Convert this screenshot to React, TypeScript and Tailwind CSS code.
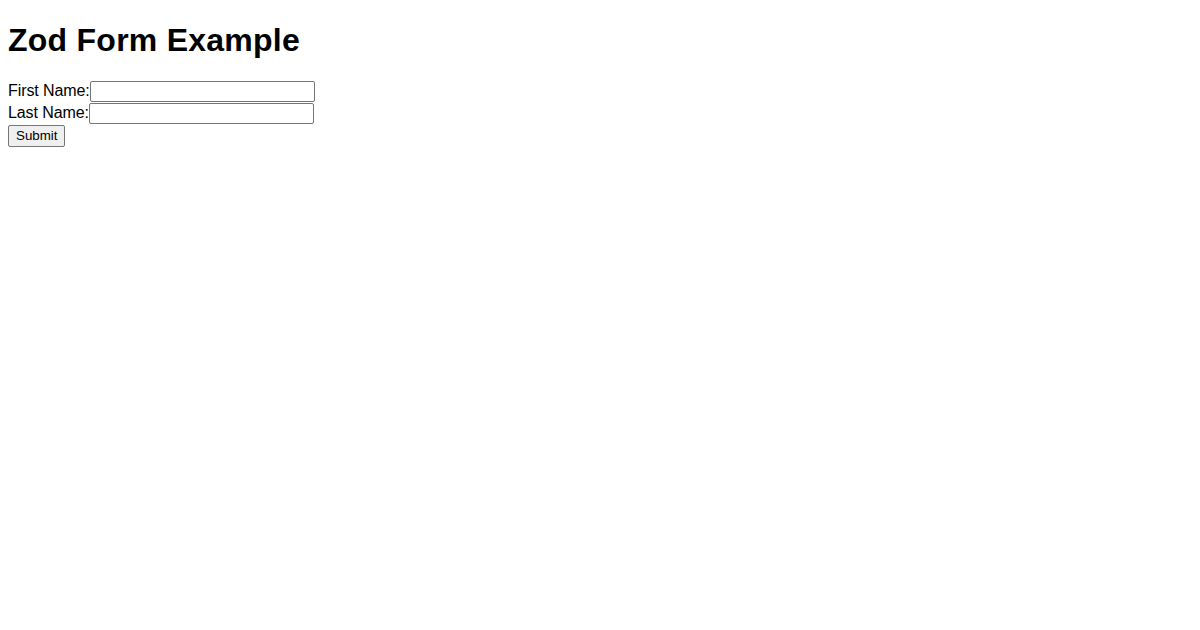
export default function App() {
  return (
    <div className="px-2 pt-[22.44px] font-['Liberation_Sans',Arial,sans-serif] text-base text-black bg-white min-h-[630px] leading-[normal]">
      <h1 className="text-[32px] font-bold mb-[20.44px] leading-[normal] tracking-[0.25px]">Zod Form Example</h1>
      <form onSubmit={(e) => e.preventDefault()}>
        <div>
          <label htmlFor="firstName" className="tracking-[-0.09px]">First Name:</label>
          <input
            id="firstName"
            type="text"
            className="w-[225px] h-[21px] mt-[1px] border border-[#767676] rounded-[2px] px-[2px] py-[1px] text-[13.33px] align-baseline bg-white"
          />
        </div>
        <div>
          <label htmlFor="lastName" className="tracking-[-0.09px]">Last Name:</label>
          <input
            id="lastName"
            type="text"
            className="w-[225px] h-[21px] mt-[1px] border border-[#767676] rounded-[2px] px-[2px] py-[1px] text-[13.33px] align-baseline bg-white"
          />
        </div>
        <button
          type="submit"
          className="h-[22px] mt-[1px] border border-[#767676] rounded-[2px] bg-[#efefef] px-[7px] py-[1px] text-[13.33px] leading-[normal] align-baseline"
        >
          Submit
        </button>
      </form>
    </div>
  );
}
